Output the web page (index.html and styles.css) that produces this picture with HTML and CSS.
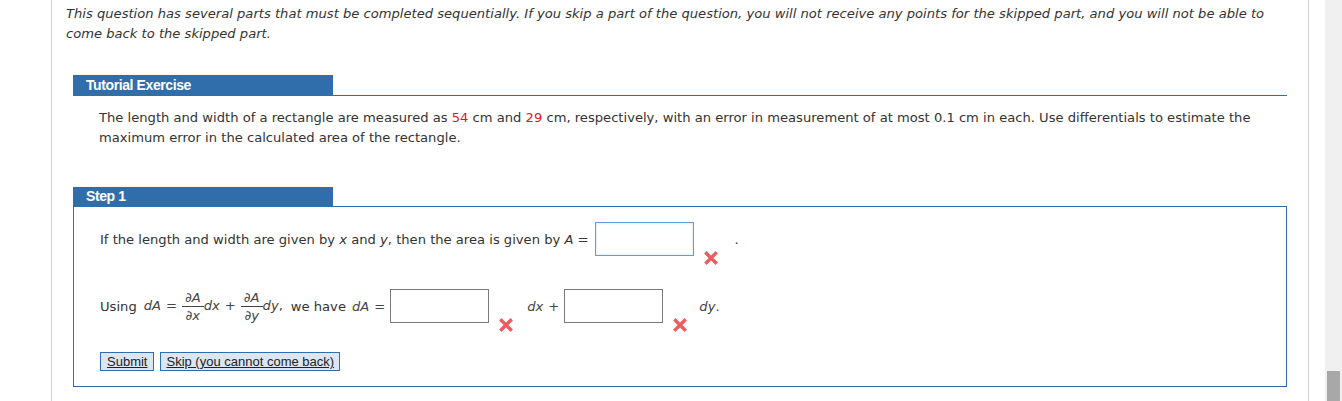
FILE: index.html
```html
<!DOCTYPE html>
<html>
<head>
<meta charset="utf-8">
<link rel="stylesheet" href="styles.css">
</head>
<body>
<div class="page">
  <div class="gutter"></div>
  <main class="main">
    <p class="intro">This question has several parts that must be completed sequentially. If you skip a part of the question, you will not receive any points for the skipped part, and you will not be able to come back to the skipped part.</p>

    <section class="section">
      <div class="sec-head"><div class="sec-title">Tutorial Exercise</div></div>
      <p class="problem">The length and width of a rectangle are measured as <span class="red">54</span> cm and <span class="red">29</span> cm, respectively, with an error in measurement of at most 0.1 cm in each. Use differentials to estimate the maximum error in the calculated area of the rectangle.</p>
    </section>

    <section class="section step">
      <div class="sec-head"><div class="sec-title">Step 1</div></div>
      <div class="step-box">
        <div class="row row1">
          <span class="txt">If the length and width are given by <i class="m">x</i> and <i class="m">y</i>, then the area is given by <i class="m">A</i> =</span>
          <span class="inp inp-focus"></span>
          <svg class="xmark" width="14" height="14" viewBox="0 0 14 14"><path d="M2.5 2.5 L11.5 11.5 M11.5 2.5 L2.5 11.5" stroke="#ef5b61" stroke-width="3.4" stroke-linecap="square"/></svg>
          <span class="dot">.</span>
        </div>
        <div class="row row2">
          <span class="txt">Using</span>
          <span class="math eq1"><i>dA</i><span class="op">=</span><span class="frac"><span class="num"><i>∂A</i></span><span class="den"><i>∂x</i></span></span><i>dx</i><span class="op">+</span><span class="frac"><span class="num"><i>∂A</i></span><span class="den"><i>∂y</i></span></span><i>dy</i>,</span>
          <span class="txt wehave">we have</span>
          <span class="math eq2"><i>dA</i><span class="op">=</span></span>
          <span class="inp"></span>
          <svg class="xmark" width="14" height="14" viewBox="0 0 14 14"><path d="M2.5 2.5 L11.5 11.5 M11.5 2.5 L2.5 11.5" stroke="#ef5b61" stroke-width="3.4" stroke-linecap="square"/></svg>
          <span class="math dxp"><i>dx</i><span class="op">+</span></span>
          <span class="inp"></span>
          <svg class="xmark" width="14" height="14" viewBox="0 0 14 14"><path d="M2.5 2.5 L11.5 11.5 M11.5 2.5 L2.5 11.5" stroke="#ef5b61" stroke-width="3.4" stroke-linecap="square"/></svg>
          <span class="math dyp"><i>dy</i>.</span>
        </div>
        <div class="buttons">
          <span class="btn btn-submit">Submit</span>
          <span class="btn btn-skip">Skip (you cannot come back)</span>
        </div>
      </div>
    </section>
  </main>
  <div class="rspace"></div>
  <div class="scrollbar"><div class="thumb"></div></div>
</div>
</body>
</html>
```
FILE: styles.css
```css
html, body {
  margin: 0;
  padding: 0;
  background: #fff;
}
body {
  font-family: "DejaVu Sans", Verdana, sans-serif;
  font-size: 13.12px;
  color: #333;
}
.page {
  display: flex;
  height: 401px;
  overflow: hidden;
}
.gutter {
  width: 51px;
  flex: none;
}
.main {
  width: 1256px;
  flex: none;
  border-left: 1px solid #d2d2d2;
  border-right: 1px solid #d2d2d2;
}
.rspace {
  width: 16px;
  flex: none;
}
.scrollbar {
  width: 17px;
  flex: none;
  background: #f0f0f0;
  display: flex;
  flex-direction: column;
  justify-content: flex-end;
  align-items: center;
}
.thumb {
  width: 13px;
  height: 30px;
  background: #a8a8a8;
}
.intro {
  margin: 4px 0 0 0;
  padding: 0 30px 0 14px;
  font-style: italic;
  line-height: 20px;
}
.section {
  margin: 31px 21px 0 21px;
}
.sec-head {
  border-bottom: 1px solid #2f6eab;
  height: 20px;
}
.sec-title {
  width: 247px;
  height: 20px;
  background: #2f6eab;
  color: #fff;
  font-family: "Liberation Sans", Arial, sans-serif;
  font-weight: bold;
  font-size: 14px;
  letter-spacing: -0.4px;
  line-height: 20px;
  padding-left: 13px;
}
.problem {
  margin: 12px 0 0 0;
  padding: 0 30px 0 26px;
  line-height: 20px;
}
.red { color: #e0141e; }
.step { margin-top: 39px; }
.step .sec-head { height: 19px; }
.step .sec-title { height: 19px; line-height: 19px; }
.step-box {
  border: 1px solid #2f6eab;
  border-top: none;
  height: 180px;
  padding: 15px 0 0 26px;
  box-sizing: border-box;
}
.row {
  display: flex;
  align-items: center;
  height: 34px;
}
.row1 .txt { margin-right: 6px; }
.m, .math i { font-style: italic; }
.math { color: #444; }
.op { margin: 0 5px; }
.inp {
  display: inline-block;
  width: 97px;
  height: 32px;
  border: 1px solid #7a7a7a;
  background: #fff;
  flex: none;
}
.inp-focus {
  border-color: #6a9bd0;
  box-shadow: inset 0 0 2px 1px #e4eefa;
}
.xmark {
  flex: none;
  margin: 38px 0 0 10px;
}
.dot { margin-left: 17px; }
.row2 { margin-top: 33px; }
.eq1 { margin-left: 7px; }
.wehave { margin-left: 8px; }
.eq2 { margin-left: 6px; margin-right: 0; }
.frac {
  display: inline-flex;
  flex-direction: column;
  align-items: center;
  vertical-align: middle;
  line-height: 17px;
  margin: 0;
}
.frac .num {
  border-bottom: 1px solid #444;
  padding: 0 3px;
}
.dxp { margin-left: 14px; margin-right: 0; }
.dxp .op { margin-right: 5px; }
.dyp { margin-left: 12px; }
.buttons {
  display: flex;
  gap: 6px;
  margin-top: 29px;
}
.btn {
  display: inline-block;
  height: 17px;
  line-height: 17px;
  border: 1px solid #2f6eab;
  background: #dce6f2;
  font-family: "Liberation Sans", Arial, sans-serif;
  font-size: 13px;
  color: #222;
  text-decoration: underline;
}
.btn-submit { padding: 0 6px; }
.btn-skip { padding: 0 5px; }
```
